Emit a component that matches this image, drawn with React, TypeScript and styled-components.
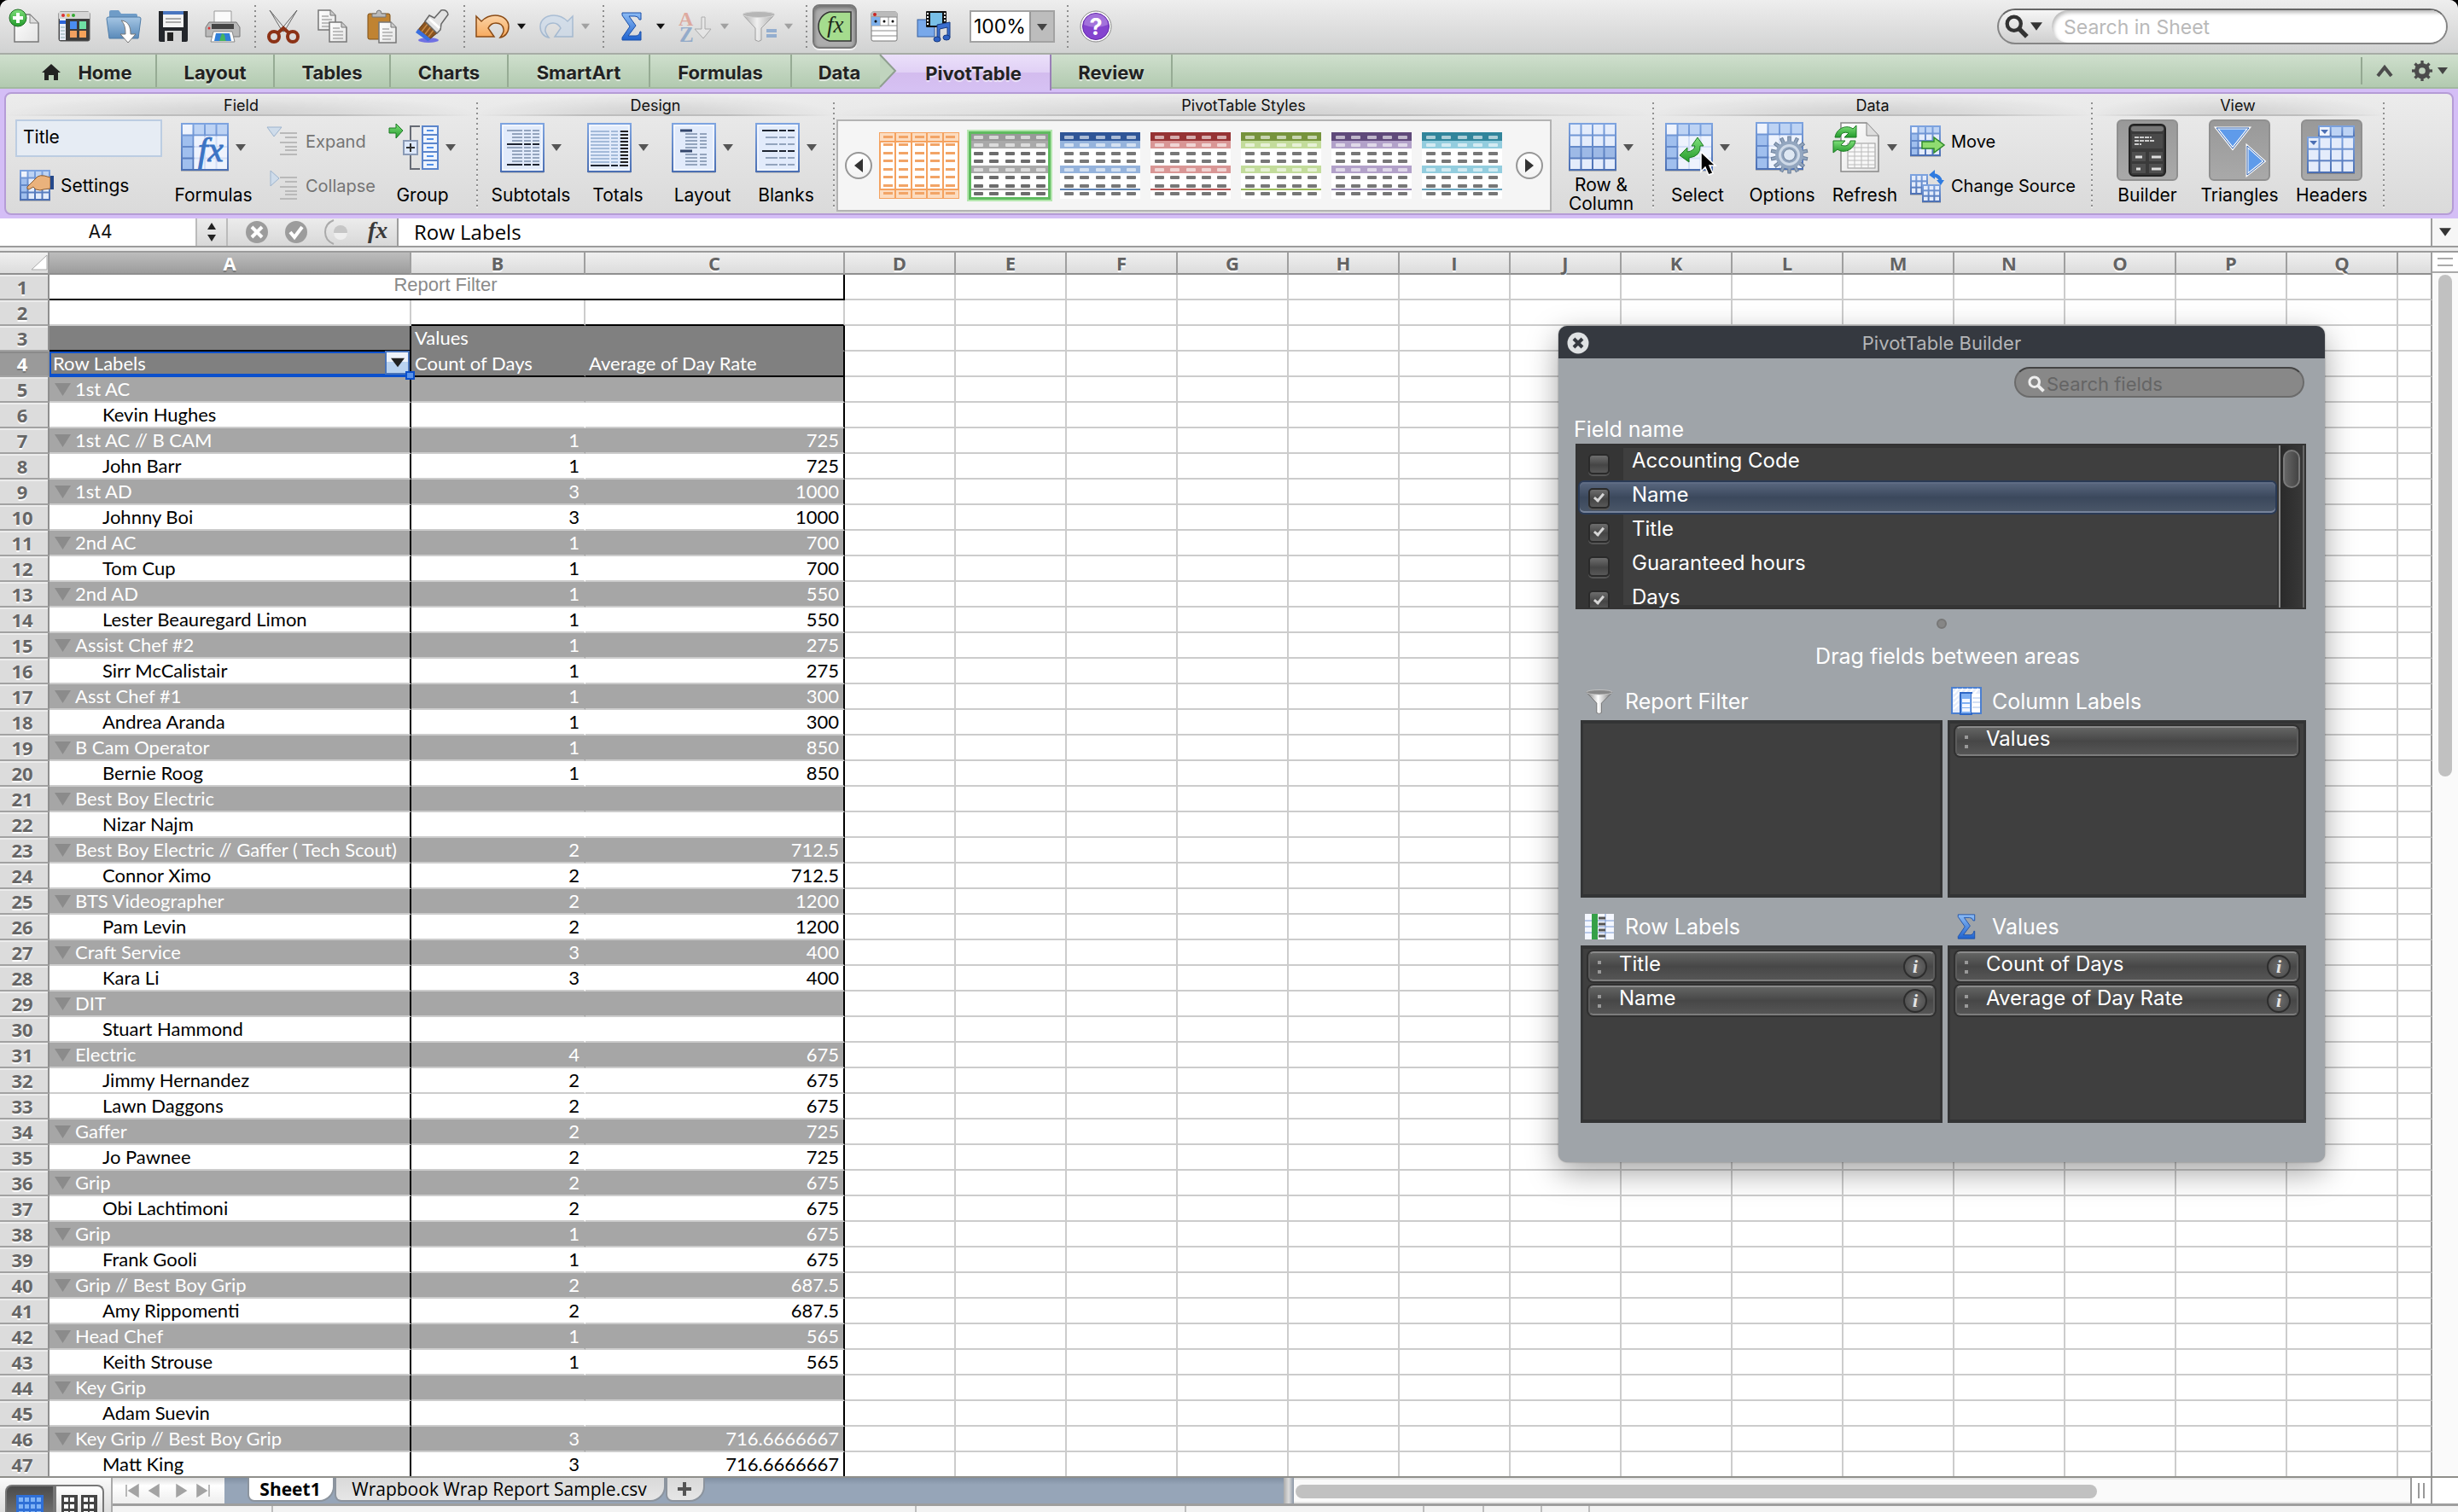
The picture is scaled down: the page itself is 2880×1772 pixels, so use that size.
import React from 'react';
import styled, { createGlobalStyle, css } from 'styled-components';

const UI = `Inter, Roboto, "Liberation Sans", sans-serif`;
const CELL = `Lato, "Open Sans", sans-serif`;
const GRANDE = `"Open Sans", "Noto Sans", sans-serif`;

const GlobalStyle = createGlobalStyle`
  *, *::before, *::after { box-sizing: border-box; }
  html, body { margin: 0; background: #000; }
  button, input, select { font: inherit; color: inherit; margin: 0; padding: 0; border: 0; background: none; }
  input:focus, button:focus { outline: none; }
  svg { display: block; flex: none; overflow: visible; }
`;

const Window = styled.div`
  height: 100vh;
  display: flex;
  flex-direction: column;
  overflow: hidden;
  border-radius: 10px 10px 0 0;
  background: #e8e8e8;
  font: 400 21px/26px ${UI};
  color: #111;
`;

/* ---------- toolbar ---------- */
const Toolbar = styled.header`
  flex: none;
  height: 64px;
  display: flex;
  align-items: center;
  background: linear-gradient(#eeeeee, #e2e2e2 40%, #d1d2d2);
  border-bottom: 2px solid #a7aca6;
`;
const ToolButton = styled.button<{ $dim?: boolean }>`
  width: 58px;
  height: 52px;
  display: grid;
  place-items: center;
  opacity: ${(p) => (p.$dim ? 0.5 : 1)};
`;
const PressedTool = styled(ToolButton)`
  width: 52px;
  margin: 0 3px;
  border-radius: 8px;
  background: #adadad;
  border: 2px solid #777;
  box-shadow: inset 0 2px 4px #666, 0 2px 0 #f3f3f3;
`;
const CaretButton = styled.button<{ $dim?: boolean }>`
  width: 17px;
  height: 40px;
  display: flex;
  align-items: center;
  opacity: ${(p) => (p.$dim ? 0.45 : 1)};
`;
const ToolRule = styled.span`
  width: 2px;
  height: 50px;
  margin: 0 3px 0 8px;
  background: repeating-linear-gradient(#8d8d8d 0 2px, transparent 2px 6px);
`;
const ZoomBox = styled.div`
  position: relative;
  width: 100px;
  height: 38px;
  margin: 0 6px 0 13px;
`;
const ZoomSelect = styled.select`
  appearance: none;
  width: 100%;
  height: 100%;
  padding-left: 3px;
  font: 400 23px/34px ${UI};
  color: #000;
  border: 2px solid #a2a2a2;
  border-radius: 0;
  background: linear-gradient(to right, #fff 68px, #999 68px 70px, #bdbdbd 70px);
`;
const ZoomCaret = styled.span`
  position: absolute;
  right: 9px;
  top: 14px;
  pointer-events: none;
`;
const SheetSearch = styled.label`
  display: flex;
  margin: 0 12px 0 auto;
  width: 528px;
  height: 42px;
  border: 2px solid #858585;
  border-top-color: #666;
  border-radius: 21px;
  overflow: hidden;
  background: linear-gradient(#f6f6f6, #cfcfcf);
`;
const SearchScope = styled.span`
  width: 62px;
  padding-left: 7px;
  display: flex;
  align-items: center;
  gap: 2px;
`;
const SearchInput = styled.input`
  flex: 1;
  min-width: 0;
  padding: 2px 14px 0;
  border-radius: 20px 0 0 20px;
  background: #fff;
  box-shadow: inset 2px 3px 4px #bbb;
  font: 400 23px/34px ${UI};
  &::placeholder { color: #b9b9b9; opacity: 1; }
`;

/* ---------- ribbon tabs ---------- */
const TabStrip = styled.nav`
  flex: none;
  height: 40px;
  display: flex;
  background: linear-gradient(#cfdfcd, #b2cab0);
  border-bottom: 2px solid #a2b9a0;
`;
const Tab = styled.button<{ $w: number; $open?: boolean; $indent?: number }>`
  position: relative;
  width: ${(p) => p.$w}px;
  height: 38px;
  display: flex;
  justify-content: center;
  align-items: center;
  gap: 20px;
  padding: 3px 0 0 ${(p) => p.$indent ?? 0}px;
  font: 700 22px/26px ${UI};
  color: #222;
  text-shadow: 0 2px 1px rgba(255, 255, 255, 0.6);
  border-right: 2px solid ${(p) => (p.$open ? 'transparent' : '#96ab94')};
`;
const ActiveTab = styled(Tab)`
  height: 42px;
  padding-bottom: 1px;
  border-right: 2px solid #9a80b8;
  background: linear-gradient(#ebe0fa, #e0d0f5 50%, #d3bcee 50%, #d6c1f3);
`;
const TabNotch = styled.svg`
  position: absolute;
  left: 0;
  top: 0;
`;
const StripTools = styled.div`
  margin-left: auto;
  width: 114px;
  display: flex;
  align-items: center;
`;
const StripRule = styled.span`
  width: 2px;
  height: 32px;
  background: #94a892;
`;
const StripButton = styled.button<{ $m: number }>`
  margin-left: ${(p) => p.$m}px;
  display: flex;
  align-items: center;
  gap: 6px;
`;

/* ---------- ribbon ---------- */
const Ribbon = styled.section`
  flex: none;
  height: 152px;
  padding: 4px 5px;
  background: #d4bef6;
`;
const RibbonPanel = styled.div`
  height: 144px;
  display: flex;
  border: 2px solid #b59cd6;
  border-radius: 8px;
  background: linear-gradient(#ececec, #dadada);
`;
const RibbonGroup = styled.section<{ $w: number }>`
  width: ${(p) => p.$w}px;
  flex: none;
`;
const GroupTitle = styled.h2`
  margin: 0;
  height: 26px;
  padding-top: 1px;
  font: 400 18px/25px ${UI};
  text-align: center;
  color: #111;
  background: radial-gradient(ellipse 50% 100% at 50% 100%, rgba(0, 0, 0, 0.11), transparent);
  border-bottom: 2px solid transparent;
  border-image: linear-gradient(to right, transparent, #bdbdbd 30%, #bdbdbd 70%, transparent) 1;
`;
const GroupBody = styled.div<{ $pad?: number }>`
  display: flex;
  padding-left: ${(p) => p.$pad ?? 0}px;
`;
const GroupRule = styled.span`
  flex: none;
  width: 2px;
  height: 124px;
  margin-top: 10px;
  background: repeating-linear-gradient(#909090 0 2px, #e9e9e9 2px 4px, transparent 4px 6px);
`;
const BigButton = styled.button<{ $w: number; $lines?: number }>`
  width: ${(p) => p.$w}px;
  padding-top: 8px;
  display: flex;
  flex-direction: column;
  align-items: center;
  gap: ${(p) => (p.$lines === 2 ? 4 : 14)}px;
  line-height: ${(p) => (p.$lines === 2 ? 22 : 26)}px;
  color: #000;
`;
const IconRow = styled.span`
  height: 58px;
  display: flex;
  align-items: center;
  gap: 8px;
`;
const MiniColumn = styled.div<{ $w: number; $pad: number }>`
  width: ${(p) => p.$w}px;
  padding: 8px 0 0 ${(p) => p.$pad}px;
  display: flex;
  flex-direction: column;
  gap: 8px;
`;
const MiniButton = styled.button<{ $off?: boolean }>`
  height: 44px;
  display: flex;
  align-items: center;
  gap: 8px;
  white-space: nowrap;
  font-size: 20px;
  color: ${(p) => (p.$off ? '#747474' : '#000')};
`;
const FieldColumn = styled.div`
  width: 172px;
  padding-top: 4px;
  display: flex;
  flex-direction: column;
  gap: 12px;
`;
const FieldInput = styled.input`
  width: 172px;
  height: 44px;
  padding: 0 7px 4px;
  border: 2px solid #bccde2;
  background: #e6ecf4;
  color: #000;
`;
const FieldSettings = styled(MiniButton)`
  padding-left: 5px;
  font-size: 21px;
`;
const Gallery = styled.div`
  width: 838px;
  height: 108px;
  margin: 4px 0 0 2px;
  padding: 0 8px;
  display: flex;
  align-items: center;
  background: #f5f5f5;
  border: 2px solid #b3b3b3;
`;
const GalleryArrow = styled.button`
  width: 32px;
  height: 32px;
  display: grid;
  place-items: center;
  border: 2px solid #979797;
  border-radius: 50%;
  background: linear-gradient(#fff, #f2f2f2);
`;
const Thumbs = styled.div`
  display: flex;
  gap: 12px;
  margin: 0 16px 0 8px;
`;
const Thumb = styled.button<{ $on?: boolean }>`
  width: 94px;
  height: 78px;
  ${(p) => p.$on && css`outline: 3px solid #5fbb5f; outline-offset: -2px; box-shadow: 0 0 0 3px #b4e6ae;`}
`;
const Toggle = styled.button`
  width: 108px;
  padding-top: 4px;
  display: flex;
  flex-direction: column;
  align-items: center;
  gap: 4px;
  line-height: 26px;
  color: #000;
`;
const ToggleFace = styled.span`
  width: 72px;
  height: 72px;
  display: grid;
  place-items: center;
  border: 2px solid #8f8f8f;
  border-radius: 6px;
  background: linear-gradient(#999, #a9a9a9);
`;
const Pointer = styled.svg`
  position: absolute;
  left: 40px;
  top: 32px;
`;
const PointerHost = styled.span`
  position: relative;
`;

/* ---------- formula bar ---------- */
const FormulaBar = styled.div`
  flex: none;
  height: 34px;
  display: flex;
  background: linear-gradient(#ececec, #d8d8d8);
  border-bottom: 2px solid #9b9b9b;
`;
const NameBox = styled.input`
  width: 231px;
  padding-left: 6px;
  text-align: center;
  background: #fff;
  border-right: 2px solid #bbb;
  font: 400 21px/30px ${UI};
`;
const Stepper = styled.button`
  width: 36px;
  display: grid;
  place-items: center;
  border-right: 2px solid #bbb;
`;
const EntryTools = styled.div`
  width: 198px;
  padding-left: 20px;
  display: flex;
  align-items: center;
  gap: 18px;
`;
const FxButton = styled.button`
  font: italic 700 28px/28px "Liberation Serif", serif;
  color: #3a3a3a;
  margin-top: -4px;
`;
const FormulaInput = styled.input`
  flex: 1;
  min-width: 0;
  padding: 0 18px;
  border: 2px solid #9d9d9d;
  border-width: 0 2px;
  background: #fff;
  color: #000;
  font: 400 24px/30px ${GRANDE};
`;
const FormulaDrop = styled.button`
  width: 30px;
  display: grid;
  place-items: center;
  background: #f6f6f6;
`;
const Divider = styled.div`
  flex: none;
  height: 6px;
  background: #ececec;
  border-bottom: 2px solid #9b9b9b;
`;

/* ---------- sheet ---------- */
const SheetArea = styled.main`
  position: relative;
  flex: 1;
  min-height: 0;
  display: flex;
  background: #fff;
`;
const GridClip = styled.div`
  flex: 1;
  min-width: 0;
  margin-top: -6px;
  padding-top: 6px;
  overflow: hidden;
`;
const Grid = styled.table`
  width: 100%;
  table-layout: fixed;
  border-collapse: separate;
  border-spacing: 0;
  font: 400 22px/26px ${CELL};
  color: #000;
  tr { height: 30px; }
`;
const ColHead = styled.th<{ $active?: boolean }>`
  height: 26px;
  padding: 0;
  font: 700 22px/22px ${GRANDE};
  color: ${(p) => (p.$active ? '#fff' : '#636363')};
  text-shadow: 0 2px 1px ${(p) => (p.$active ? '#777' : '#fff')};
  background: ${(p) => (p.$active ? 'linear-gradient(#bdbdbd, #9c9c9c)' : 'linear-gradient(#f0f0f0, #dcdcdc)')};
  border-right: 2px solid #9f9f9f;
  border-bottom: 2px solid #8f8f8f;
`;
const Corner = styled(ColHead)`
  svg { margin-left: auto; }
`;
const RowHead = styled.th<{ $active?: boolean }>`
  padding: 0 4px 0 0;
  font: 700 22px/26px ${GRANDE};
  color: ${(p) => (p.$active ? '#fff' : '#666')};
  text-shadow: 0 2px 1px ${(p) => (p.$active ? '#777' : '#fff')};
  background: ${(p) => (p.$active ? '#9a9a9a' : '#dcdcdc')};
  border-right: 2px solid #8f8f8f;
  border-bottom: 2px solid #a2a2a2;
  box-shadow: inset 0 2px 0 ${(p) => (p.$active ? '#8a8a8a' : '#ececec')};
`;
type Tone = 'plain' | 'band' | 'head';
const toneOf = { plain: '#fff', band: '#a6a6a6', head: '#808080' };
const Cell = styled.td<{ $tone?: Tone; $right?: string; $bottom?: string; $num?: boolean; $pad?: number }>`
  position: relative;
  padding: 0 ${(p) => (p.$num ? 5 : 0)}px 0 ${(p) => p.$pad ?? 4}px;
  white-space: nowrap;
  text-align: ${(p) => (p.$num ? 'right' : 'left')};
  color: ${(p) => (!p.$tone || p.$tone === 'plain' ? '#000' : '#fff')};
  background: ${(p) => toneOf[p.$tone ?? 'plain']};
  border-right: 2px solid ${(p) => p.$right ?? '#cccccc'};
  border-bottom: 2px solid ${(p) => p.$bottom ?? '#cccccc'};
`;
const FilterCell = styled(Cell)`
  padding-right: 6px;
  text-align: center;
  vertical-align: top;
  font: 400 22px/24px "Liberation Sans", Arial, sans-serif;
  color: #8a8a8a;
`;
const ActiveCell = styled(Cell)`
  box-shadow: inset 2px 2px 0 #0b50cc, inset -2px -2px 0 #0b50cc;
`;
const GroupLabel = styled.span`
  display: flex;
  align-items: center;
  gap: 5px;
`;
const DropButton = styled.button`
  position: absolute;
  right: 0;
  top: -1px;
  width: 29px;
  height: 28px;
  display: grid;
  place-items: center;
  border: 2px solid #4a74b8;
  background: linear-gradient(#eef3fa 45%, #b9d2ef 45%);
`;
const FillHandle = styled.span`
  position: absolute;
  right: -6px;
  bottom: -5px;
  width: 11px;
  height: 10px;
  z-index: 1;
  border: 2px solid #0b50cc;
  background: #5b94ea;
`;
const VScroll = styled.div`
  width: 30px;
  display: flex;
  flex-direction: column;
  align-items: center;
  background: #fafafa;
`;
const VSplit = styled.span`
  width: 100%;
  height: 24px;
  display: grid;
  place-items: center;
  background: #fff;
  border-bottom: 2px solid #aaa;
`;
const VThumb = styled.span`
  width: 16px;
  height: 41%;
  margin-top: 2px;
  border-radius: 8px;
  background: #c1c1c1;
`;

/* ---------- builder ---------- */
const Builder = styled.aside`
  position: absolute;
  top: 86px;
  right: 156px;
  width: 898px;
  padding-bottom: 46px;
  border-radius: 10px;
  overflow: hidden;
  background: #9fa4a9;
  color: #fff;
  box-shadow: 0 12px 36px rgba(0, 0, 0, 0.36), 0 0 2px rgba(0, 0, 0, 0.4);
  font: 400 25px/30px ${UI};
  z-index: 2;
`;
const BuilderBar = styled.header`
  height: 38px;
  display: flex;
  align-items: center;
  padding: 2px 36px 0 10px;
  background: #353940;
`;
const BuilderTitle = styled.h2`
  flex: 1;
  margin: 0;
  text-align: center;
  font: 400 22px/30px ${UI};
  color: #b4b5b7;
`;
const FieldSearch = styled.label`
  width: 340px;
  height: 36px;
  margin: 10px 24px 0 auto;
  padding: 3px 0 0 14px;
  display: flex;
  align-items: center;
  gap: 2px;
  border: 2px solid #6b6b6b;
  border-top-color: #444;
  border-radius: 18px;
  background: #888;
`;
const FieldSearchInput = styled.input`
  flex: 1;
  min-width: 0;
  font: 400 22px/30px ${UI};
  &::placeholder { color: #656565; opacity: 1; }
`;
const ListTitle = styled.h3`
  margin: 22px 0 2px 18px;
  font: 400 25px/30px ${UI};
`;
const FieldList = styled.div`
  height: 194px;
  margin: 0 22px 0 20px;
  display: flex;
  border: 2px solid #333;
  background: #3f3f3f;
  overflow: hidden;
`;
const FieldRows = styled.div`
  flex: 1;
  border: 3px solid #353535;
  border-right-width: 2px;
  background: linear-gradient(to right, #353535 51px, #3f3f3f 51px);
`;
const FieldRow = styled.label<{ $on?: boolean }>`
  height: 36px;
  margin: 0 2px 4px 0;
  padding: 0 0 6px 10px;
  display: flex;
  align-items: center;
  gap: 26px;
  border-radius: 5px;
  font: 400 24px/28px ${UI};
  ${(p) => p.$on && css`
    background: linear-gradient(#5a6880, #3b485c 50%, #4b5769);
    box-shadow: 0 0 0 2px #2a3a55, inset 0 -2px 0 #76839a, inset 0 2px 0 #5f6c84;
  `}
`;
const Tick = styled.input`
  appearance: none;
  position: relative;
  width: 25px;
  height: 24px;
  margin-top: 7px;
  border: 2px solid #2a2a2a;
  border-radius: 5px;
  background: linear-gradient(#6e6e6e, #454545 55%, #585858);
  box-shadow: 0 2px 0 #555;
  &:checked::after {
    content: '';
    position: absolute;
    left: 7px;
    top: 2px;
    width: 7px;
    height: 12px;
    border: solid #d6d6d6;
    border-width: 0 3px 3px 0;
    transform: rotate(40deg);
  }
`;
const ListScroll = styled.div`
  width: 30px;
  border-left: 2px solid #8a8a8a;
  border-right: 2px solid #666;
  padding: 5px 3px;
  background: linear-gradient(to right, #2a2a2a, #383838);
`;
const ListThumb = styled.div`
  height: 45px;
  border-radius: 10px;
  border: 2px solid #7a7a7a;
  background: linear-gradient(to right, #666, #444);
`;
const Grip = styled.div`
  width: 12px;
  height: 12px;
  margin: 11px auto 17px;
  border-radius: 50%;
  background: #868686;
  border: 2px solid #777;
`;
const DragHint = styled.p`
  margin: 0;
  padding-left: 14px;
  text-align: center;
`;
const Zones = styled.div`
  display: grid;
  grid-template-columns: 424fr 420fr;
  column-gap: 6px;
  margin: 4px 22px 0 26px;
`;
const ZoneTitle = styled.h3`
  margin: 0;
  height: 56px;
  padding: 0 0 4px 4px;
  display: flex;
  align-items: flex-end;
  gap: 12px;
  font: 400 25px/36px ${UI};
`;
const ZoneBox = styled.div`
  height: 208px;
  padding: 3px 6px;
  display: flex;
  flex-direction: column;
  gap: 5px;
  border: 4px solid #333435;
  border-width: 4px 3px;
  background: #3f3f3f;
`;
const Chip = styled.div`
  height: 35px;
  padding: 0 7px 0 8px;
  display: flex;
  align-items: center;
  gap: 20px;
  font: 400 24px/28px ${UI};
  border-radius: 6px;
  border: 2px solid #707070;
  border-color: #8a8a8a #5c5c5c #7d7d7d;
  background: linear-gradient(#636463, #474747 50%, #555);
  box-shadow: 0 0 0 2px #303030;
`;
const ChipName = styled.span`
  flex: 1;
  padding-bottom: 6px;
`;
const InfoButton = styled.button`
  width: 28px;
  height: 28px;
  border-radius: 50%;
  border: 2px solid #2d2d2d;
  background: radial-gradient(#6d6d6d, #484848);
  font: italic 700 22px/22px "Liberation Serif", serif;
  color: #e6e6e6;
`;

/* ---------- bottom ---------- */
const Footer = styled.footer`
  flex: none;
  height: 42px;
  display: flex;
  border-top: 2px solid #8f8f8b;
`;
const ViewSwitch = styled.div`
  width: 132px;
  padding: 8px 8px 0 6px;
  display: flex;
  background: linear-gradient(#fafafa, #ddd);
  border-right: 2px solid #aaa;
`;
const ViewButton = styled.button<{ $on?: boolean }>`
  flex: 1;
  padding-top: 10px;
  display: grid;
  justify-items: center;
  align-items: start;
  overflow: hidden;
  border: 2px solid #777;
  border-bottom: 0;
  border-radius: ${(p) => (p.$on ? '8px 0 0 0' : '0 8px 0 0')};
  background: ${(p) => (p.$on ? 'linear-gradient(#4a4a4a, #6e6e6e)' : 'linear-gradient(#fff, #e3e3e3)')};
`;
const FooterMain = styled.div`
  flex: 1;
  min-width: 0;
  display: flex;
  flex-direction: column;
`;
const SheetTabs = styled.div`
  height: 30px;
  display: flex;
  background: linear-gradient(#8190a3, #96a5b8 8px);
`;
const TabNav = styled.div`
  width: 131px;
  padding: 0 14px;
  display: flex;
  align-items: center;
  justify-content: space-between;
  background: linear-gradient(#dedede, #fff 30%, #eee);
`;
const SheetTab = styled.button<{ $w: number; $on?: boolean }>`
  width: ${(p) => p.$w}px;
  height: 28px;
  padding-right: 2px;
  text-align: center;
  white-space: nowrap;
  border: 2px solid #8c949e;
  border-top: 0;
  border-radius: 0 0 18px 8px;
  background: ${(p) => (p.$on ? '#fff' : 'linear-gradient(#d9d9d9, #e6e6e6)')};
  font: ${(p) => (p.$on ? 700 : 400)} 21px/24px ${GRANDE};
  color: #000;
`;
const TabsRow = styled.div`
  display: flex;
  margin-left: 27px;
`;
const HArea = styled.div`
  margin-left: auto;
  width: 1346px;
  display: flex;
`;
const HSplit = styled.span`
  width: 12px;
  background: linear-gradient(to right, #aaa, #ddd, #8894a4);
`;
const HTrack = styled.div`
  flex: 1;
  display: flex;
  align-items: center;
  padding: 2px 2px 0;
  background: #fafafa;
  box-shadow: inset 0 2px 0 #e6e6e6, inset 0 -2px 0 #e6e6e6;
`;
const HThumb = styled.span`
  width: 72%;
  height: 16px;
  border-radius: 8px;
  background: #c1c1c1;
`;
const HGrip = styled.span`
  width: 26px;
  display: grid;
  place-items: center;
  background: #fff;
  border: solid #9a9a9a;
  border-width: 0 2px;
`;
const FooterEnd = styled.span`
  width: 30px;
  background: #fff;
`;
const StatusBar = styled.div`
  flex: 1;
  display: flex;
  border-top: 3px solid #9e9e9e;
  background: #f3f3f3;
`;
const StatusCell = styled.span<{ $w: number }>`
  width: ${(p) => p.$w}px;
  border-right: 2px solid #bdbdbd;
`;

/* ---------- drawings ---------- */
const Caret = ({ w = 12, color = '#555' }: { w?: number; color?: string }) => (
  <svg width={w} height={w} viewBox="0 0 12 12"><path d="M0 2h12L6 10z" fill={color} /></svg>
);

type MatrixProps = { x?: number; y?: number; w: number; h: number; cols: number; rows: number; head?: boolean; sheet?: boolean; dark?: number[] };
const Matrix = ({ x = 0, y = 0, w, h, cols, rows, head, sheet, dark = [] }: MatrixProps) => {
  const cw = (w - 2) / cols;
  const ch = (h - 2) / rows;
  const out = [];
  for (let r = 0; r < rows; r++) {
    for (let c = 0; c < cols; c++) {
      const edge = head && (r === 0 || c === 0);
      const fill = dark.includes(r) ? '#9db9e6' : edge ? (r + c === 0 ? '#eef3fd' : r === 0 ? '#bdd3f4' : '#a0bfee') : sheet ? '#eef3fd' : '#e4ecfb';
      out.push(<rect key={`${r}-${c}`} x={x + 2 + c * cw} y={y + 2 + r * ch} width={cw - 2} height={ch - 2} fill={fill} />);
    }
  }
  return (
    <g>
      <rect x={x} y={y + 1} width={w} height={h} fill="#000" opacity="0.2" />
      <rect x={x} y={y} width={w} height={h} fill="url(#gridEdge)" />
      {sheet && <rect x={x + 2 + cw} y={y + 2 + ch} width={w - cw - 4} height={h - ch - 4} fill="#d3dff6" />}
      {out}
    </g>
  );
};

const DefsHost = styled.svg`
  position: absolute;
`;
const SharedDefs = () => (
  <DefsHost width="0" height="0" aria-hidden="true">
    <defs>
      <linearGradient id="gridEdge" x1="0" y1="0" x2="0" y2="1"><stop offset="0" stopColor="#7ea4e0" /><stop offset="1" stopColor="#4b6fb3" /></linearGradient>
      <linearGradient id="pageFill" x1="0" y1="0" x2="1" y2="1"><stop offset="0" stopColor="#fff" /><stop offset="1" stopColor="#e4e4e4" /></linearGradient>
      <linearGradient id="blueFill" x1="0" y1="0" x2="0" y2="1"><stop offset="0" stopColor="#8dbcf5" /><stop offset="1" stopColor="#1f63cf" /></linearGradient>
      <linearGradient id="folderFill" x1="0" y1="0" x2="0" y2="1"><stop offset="0" stopColor="#a5c6e4" /><stop offset="1" stopColor="#5a8ab9" /></linearGradient>
      <linearGradient id="greenFill" x1="0" y1="0" x2="0" y2="1"><stop offset="0" stopColor="#7fe07a" /><stop offset="1" stopColor="#229a2b" /></linearGradient>
      <linearGradient id="orangeFill" x1="0" y1="0" x2="0" y2="1"><stop offset="0" stopColor="#fbd3a6" /><stop offset="1" stopColor="#f7a95c" /></linearGradient>
      <linearGradient id="metalFill" x1="0" y1="0" x2="1" y2="0"><stop offset="0" stopColor="#777" /><stop offset="0.45" stopColor="#fff" /><stop offset="1" stopColor="#777" /></linearGradient>
    </defs>
  </DefsHost>
);

const NewIcon = () => (
  <svg width="36" height="40" viewBox="0 0 36 40">
    <path d="M6 6h18l10 10v22H6z" fill="url(#pageFill)" stroke="#777" strokeWidth="1.5" /><path d="M24 6v10h10z" fill="#ddd" stroke="#888" />
    <circle cx="10" cy="10" r="10" fill="url(#greenFill)" stroke="#1b6e20" /><path d="M10 4v12M4 10h12" stroke="#fff" strokeWidth="4" />
  </svg>
);
const GalleryIcon = () => (
  <svg width="38" height="36" viewBox="0 0 38 36">
    <rect x="1" y="1" width="36" height="34" rx="2" fill="#3c3c3c" stroke="#555" /><rect x="1" y="1" width="36" height="8" fill="#d6d6d6" />
    <circle cx="6" cy="5" r="2" fill="#d33" /><circle cx="12" cy="5" r="2" fill="#da2" /><circle cx="18" cy="5" r="2" fill="#3a3" />
    <rect x="2" y="9" width="7" height="25" fill="#e9eefa" /><rect x="2" y="11" width="7" height="4" fill="#2a64d8" /><path d="M3 19h5M3 23h5M3 27h5M3 31h5" stroke="#8aa" />
    <rect x="14" y="12" width="8" height="9" fill="#4a8df0" /><rect x="25" y="12" width="8" height="9" fill="#6fe0a5" />
    <rect x="14" y="23" width="8" height="8" fill="#f0a060" /><rect x="25" y="23" width="8" height="8" fill="#f5a25a" />
  </svg>
);
const OpenIcon = () => (
  <svg width="40" height="40" viewBox="0 0 40 40">
    <path d="M3 3q0-2 2-2h9l3 4h17q2 0 2 2v26H3z" fill="#6f9cc7" /><path d="M0 11q0-2 2-2h36q2 0 2 2l-3 23H3z" fill="url(#folderFill)" stroke="#507da8" />
    <path d="M17 13c9 1 11 8 11 16h6l-9 10-9-10h6c0-7-1-12-5-16z" fill="#fff" stroke="#777" />
  </svg>
);
const SaveIcon = () => (
  <svg width="36" height="38" viewBox="0 0 36 38">
    <path d="M1 1h34v34q0 2-2 2H3q-2 0-2-2z" fill="#23262b" /><rect x="6" y="1" width="24" height="19" fill="#f3f3f3" /><rect x="6" y="1" width="24" height="4" fill="#4a76c0" />
    <path d="M9 10h18M9 14h18" stroke="#aaa" strokeWidth="2" /><rect x="8" y="24" width="20" height="13" fill="#d5d5d5" /><rect x="11" y="26" width="7" height="10" fill="#222" />
  </svg>
);
const PrintIcon = () => (
  <svg width="42" height="38" viewBox="0 0 42 38">
    <path d="M11 1h20v16H11z" fill="#fafafa" stroke="#999" /><path d="M5 14h32l4 6v11H1V20z" fill="#b9b9b9" stroke="#777" /><rect x="8" y="16" width="26" height="6" fill="#444" />
    <path d="M10 25h22l3 12H7z" fill="#fff" stroke="#888" /><path d="M13 27h16l2 9H11z" fill="#2f7fd8" /><path d="M20 27c6 2 2 6 5 9h-8z" fill="#45b55c" /><circle cx="5" cy="21" r="1.5" fill="#d33" />
  </svg>
);
const CutIcon = () => (
  <svg width="38" height="40" viewBox="0 0 38 40">
    <path d="M3 1l19 23-4 2zM35 1L16 24l4 2z" fill="#e6e6e6" stroke="#666" />
    <circle cx="8" cy="32" r="6" fill="none" stroke="#8c3216" strokeWidth="4" /><circle cx="30" cy="32" r="6" fill="none" stroke="#8c3216" strokeWidth="4" />
    <path d="M12 28l7-6 7 6" fill="none" stroke="#8c3216" strokeWidth="4" />
  </svg>
);
const CopyIcon = () => (
  <svg width="36" height="40" viewBox="0 0 36 40">
    {[[1, 1], [14, 15]].map(([x, y]) => (
      <g key={x} transform={`translate(${x} ${y})`}>
        <path d="M0 0h14l6 6v17H0z" fill="url(#pageFill)" stroke="#777" strokeWidth="1.5" /><path d="M14 0v6h6" fill="#ccc" stroke="#777" />
        <path d="M4 7h8M4 11h12M4 15h12M4 19h12" stroke="#aaa" strokeWidth="1.5" />
      </g>
    ))}
  </svg>
);
const PasteIcon = () => (
  <svg width="36" height="40" viewBox="0 0 36 40">
    <rect x="1" y="5" width="26" height="30" rx="2" fill="#c08332" stroke="#7d4f17" /><path d="M6 9V5h5q0-4 3-4t3 4h5v4z" fill="#bbb" stroke="#777" />
    <g transform="translate(14 15)"><path d="M0 0h14l6 6v18H0z" fill="url(#pageFill)" stroke="#777" strokeWidth="1.5" /><path d="M14 0v6h6" fill="#ccc" stroke="#777" /><path d="M4 8h8M4 12h12M4 16h12M4 20h10" stroke="#aaa" strokeWidth="1.5" /></g>
  </svg>
);
const BrushIcon = () => (
  <svg width="40" height="40" viewBox="0 0 40 40">
    <ellipse cx="16" cy="36" rx="12" ry="3" fill="#4444e8" opacity="0.7" />
    <path d="M13 13L3 25l13 11 11-9z" fill="#8a5420" stroke="#5f3814" /><path d="M15 17l-7 9M19 20l-7 9M23 23l-7 9" stroke="#c98a44" strokeWidth="1.5" /><path d="M4 23l15 12-4 2L1 27z" fill="#3a6fe0" />
    <path d="M17 7l6 3 8-9q7-1 8 5l-8 11-1 7-4 4L12 14z" fill="#e2e2e2" stroke="#666" strokeWidth="1.5" /><path d="M17 11l12 11" stroke="#fff" strokeWidth="3" />
  </svg>
);
const CurvedArrow = ({ flip }: { flip?: boolean }) => (
  <svg width="40" height="28" viewBox="0 0 40 28">
    <path transform={flip ? 'matrix(-1 0 0 1 40 0)' : undefined} d="M1 2l6 6C12 3 17 1 23 1c10 0 16 6 16 13 0 7-4 12-10 13 3-4 5-7 4-10-1-5-5-7-9-7-4 0-7 2-9 6l7 10H1z" fill={flip ? '#c5d9ef' : 'url(#orangeFill)'} stroke={flip ? '#6f97c4' : '#8a4b16'} strokeWidth="1.5" />
  </svg>
);
const SigmaIcon = ({ w = 24, h = 34 }: { w?: number; h?: number }) => (
  <svg width={w} height={h} viewBox="0 0 24 34"><path d="M1 1h22v8h-2q-1-4-5-4H9l8 11L8 28h9q4 0 5-5h1v10H1v-3l9-13L1 4z" fill="url(#blueFill)" stroke="#1a4fa8" /></svg>
);
const SortIcon = () => (
  <svg width="40" height="38" viewBox="0 0 40 38">
    <text x="0" y="18" fontFamily="Liberation Serif, serif" fontWeight="700" fontSize="24" fill="#d9705c">A</text>
    <text x="1" y="37" fontFamily="Liberation Serif, serif" fontWeight="700" fontSize="25" fill="#4f7dba">Z</text>
    <path d="M27 8h4v14h7l-9 11-10-11h8z" fill="#eee" stroke="#777" />
  </svg>
);
const FunnelIcon = ({ lines = true, w = 42, h = 36 }: { lines?: boolean; w?: number; h?: number }) => (
  <svg width={w} height={h} viewBox={lines ? '0 0 42 36' : '0 0 40 36'}>
    <path d="M1 4l15 16v14q4 3 7 0V20L39 4z" fill="url(#metalFill)" stroke="#666" /><ellipse cx="20" cy="4" rx="19" ry="3.5" fill="#888" stroke="#ccc" />
    {lines && <path d="M29 21h12v4H29zM29 27h12v4H29z" fill="#4f82c4" />}
  </svg>
);
const FxBoxIcon = () => (
  <svg width="40" height="36" viewBox="0 0 40 36">
    <path d="M14 1h25v34H14C6 33 1 26 1 18S6 3 14 1z" fill="#a5dc8e" stroke="#333" strokeWidth="1.5" />
    <text x="11" y="25" fontFamily="Liberation Serif, serif" fontStyle="italic" fontSize="27" fill="#1d2a1a">fx</text>
  </svg>
);
const FormIcon = () => (
  <svg width="32" height="36" viewBox="0 0 32 36">
    <rect x="1" y="1" width="30" height="34" rx="2" fill="#fff" stroke="#777" /><rect x="1" y="1" width="30" height="6" fill="#bbb" /><circle cx="5" cy="4" r="2" fill="#c22" />
    <path d="M1 7h30M1 17h30M1 23h30M1 29h30M11 7v10M21 7v10" stroke="#888" /><rect x="1" y="7" width="10" height="10" fill="#7eb0ea" /><circle cx="6" cy="12" r="1.5" /><circle cx="16" cy="12" r="1.5" /><circle cx="26" cy="12" r="1.5" />
  </svg>
);
const MediaIcon = () => (
  <svg width="40" height="38" viewBox="0 0 40 38">
    <rect x="1" y="11" width="20" height="20" fill="#78a8ea" stroke="#345f9f" /><rect x="11" y="1" width="24" height="19" rx="1" fill="#111" /><rect x="16" y="3" width="14" height="15" fill="#79bfe6" />
    <path d="M13 3v16M33 3v16" stroke="#fff" strokeWidth="2" strokeDasharray="2 2" />
    <path d="M24 17l15-3v18h-3V20l-9 2v13h-3z" fill="#3b6fd0" stroke="#173a80" /><ellipse cx="24" cy="34" rx="4" ry="3" fill="#2f62c4" stroke="#173a80" /><ellipse cx="35" cy="32" rx="4" ry="3" fill="#2f62c4" stroke="#173a80" />
  </svg>
);
const HelpIcon = () => (
  <svg width="38" height="38" viewBox="0 0 38 38">
    <circle cx="19" cy="19" r="18" fill="#fff" stroke="#888" /><circle cx="19" cy="19" r="15.500" fill="#8443cf" stroke="#6427ab" />
    <path d="M5 17a14 13 0 0 1 28 0q-14 6-28 0z" fill="#fff" opacity="0.25" />
    <text x="19" y="29" textAnchor="middle" fontFamily="Inter, sans-serif" fontWeight="700" fontSize="27" fill="#fff">?</text>
  </svg>
);
const LensIcon = ({ w, color }: { w: number; color: string }) => (
  <svg width={w} height={w} viewBox="0 0 26 26"><circle cx="10" cy="10" r="7.500" fill="none" stroke={color} strokeWidth="4" /><path d="M15 15l9 9" stroke={color} strokeWidth="5" /></svg>
);
const HomeIcon = () => (
  <svg width="22" height="19" viewBox="0 0 22 19"><path d="M11 0l11 10h-3v9h-5v-6H8v6H3v-9H0z" fill="#222" /></svg>
);
const GearGlyph = ({ size, teeth, fill, hole, stroke }: { size: number; teeth: number; fill: string; hole: string; stroke: string }) => {
  const c = size / 2;
  const tooth = size / (teeth * 0.9);
  return (
    <g>
      {Array.from({ length: teeth }, (_, i) => (
        <rect key={i} x={c - tooth / 2} y="0" width={tooth} height={c} fill={fill} stroke={stroke} transform={`rotate(${(360 / teeth) * i} ${c} ${c})`} />
      ))}
      <circle cx={c} cy={c} r={size * 0.38} fill={fill} /><circle cx={c} cy={c} r={size * 0.16} fill={hole} stroke={stroke} />
    </g>
  );
};
const GearIcon = () => (
  <svg width="24" height="24" viewBox="0 0 24 24"><GearGlyph size={24} teeth={8} fill="#4c4c4c" hole="#c0d2be" stroke="none" /></svg>
);

const FormulasIcon = () => (
  <svg width="56" height="58" viewBox="0 0 56 58">
    <Matrix w={56} h={56} cols={4} rows={4} head sheet />
    <text x="20" y="45" fontFamily="Liberation Serif, serif" fontStyle="italic" fontSize="41" fill="#3b74c4" stroke="#3b74c4">fx</text>
  </svg>
);
const SettingsIcon = () => (
  <svg width="40" height="38" viewBox="0 0 40 38">
    <Matrix w={36} h={36} cols={4} rows={4} head />
    <path d="M9 20l12-12q3-2 8-1l7 2v13l-8 1-4 1-5-1-3-3-5 3q-3 0-2-3z" fill="#eab27c" stroke="#8a5a2e" /><path d="M36 7h4v16h-4z" fill="#24488a" />
  </svg>
);
const OutlineIcon = ({ open }: { open?: boolean }) => (
  <svg width="38" height="38" viewBox="0 0 38 38">
    {open ? <path d="M1 2h17L9 13z" fill="#cfdcea" stroke="#9db4ce" /> : <path d="M5 1l10 9-10 9z" fill="#cfdcea" stroke="#9db4ce" />}
    <path d="M16 9h20M22 14h14M16 20h20M22 25h14M22 29h14M16 34h20" stroke="#b9b9b9" strokeWidth="2" />
  </svg>
);
const GroupIcon = () => (
  <svg width="58" height="56" viewBox="0 0 58 56">
    <path d="M0 5h8V0l8 8-8 9v-6H0z" fill="url(#greenFill)" stroke="#1d7a25" /><path d="M36 3H25v50h11" fill="none" stroke="#666b75" strokeWidth="2" />
    <rect x="17" y="20" width="16" height="16" fill="#dde8fb" stroke="#8a9ab5" strokeWidth="2" /><path d="M25 23v10M20 28h10" stroke="#333" strokeWidth="2" />
    {[0, 1, 2, 3, 4].map((i) => (
      <g key={i}><rect x="39" y={3 + i * 10} width="18" height="10" fill="#eef4fe" stroke="#5b85cb" strokeWidth="2" /><path d={`M44 ${8 + i * 10}h8`} stroke="#4f8fe8" strokeWidth="2" /></g>
    ))}
  </svg>
);
type DocKind = 'subtotals' | 'totals' | 'layout' | 'blanks';
const DocIcon = ({ kind }: { kind: DocKind }) => {
  const lines = [];
  const step = kind === 'blanks' ? 8 : 4;
  let i = 0;
  for (let y = kind === 'totals' ? 10 : 9; y <= 50; y += step, i++) {
    const strong = kind === 'subtotals' ? i === 4 || i === 10 : kind === 'layout' ? i % 6 === 0 : kind === 'blanks' ? i % 3 === 0 : i === 10;
    const dark = strong ? '#1e2430' : kind === 'totals' ? '#a3bad9' : '#93a4bd';
    if (kind === 'layout') {
      lines.push(strong ? <path key={y} d={`M10 ${y}h14`} stroke="#34466b" strokeWidth="3" /> : <path key={y} d={`M16 ${y}h14M33 ${y}h8`} stroke={dark} strokeWidth="2" />);
    } else {
      const x0 = kind === 'totals' ? 4 : strong ? 8 : kind === 'blanks' ? 12 : i === 5 || i === 0 ? 8 : 14;
      lines.push(<path key={y} d={`M${x0} ${y}H26M28 ${y}h8M38 ${y}h8`} stroke={dark} strokeWidth="2" />);
      if (kind === 'totals') lines.push(<path key={`t${y}`} d={`M39 ${y}h9`} stroke="#222" strokeWidth="2" />);
    }
  }
  return (
    <svg width="52" height="58" viewBox="0 0 52 58">
      <rect x="1" y="1" width="50" height="58" fill="#000" opacity="0.15" /><rect x="1" y="1" width="50" height="56" fill="#e2ebfb" stroke="url(#gridEdge)" strokeWidth="2" />
      <rect x="3" y="3" width="46" height="52" fill="none" stroke="#fff" />{lines}
    </svg>
  );
};
const RowColIcon = () => (<svg width="56" height="58" viewBox="0 0 56 58"><Matrix w={56} h={56} cols={4} rows={4} dark={[2]} /></svg>);
const SelectIcon = () => (
  <svg width="56" height="58" viewBox="0 0 56 58">
    <Matrix w={56} h={56} cols={4} rows={4} head sheet />
    <path d="M38 17l7 10h-4q1 12-13 14v5l-11-8 9-9v5q8-1 9-7h-4z" fill="url(#greenFill)" stroke="#1d7a25" />
  </svg>
);
const OptionsIcon = () => (
  <svg width="62" height="60" viewBox="0 0 62 60">
    <Matrix w={56} h={56} cols={4} rows={4} head sheet />
    <g transform="translate(18 17)"><GearGlyph size={43} teeth={14} fill="#93a6bf" hole="#dfe8f3" stroke="#6b7f9a" /><circle cx="21.500" cy="21.500" r="11" fill="none" stroke="#cfdae8" strokeWidth="3" /></g>
  </svg>
);
const RefreshIcon = () => (
  <svg width="56" height="60" viewBox="0 0 56 60">
    <path d="M10 1h30l14 15v42H10z" fill="url(#pageFill)" stroke="#888" strokeWidth="1.500" /><path d="M40 1v15h14" fill="#ddd" stroke="#888" />
    <rect x="18" y="25" width="32" height="29" fill="#f8f8f8" stroke="#999" /><path d="M18 30h32M18 35h32M18 40h32M18 45h32M18 50h32M26 25v29M34 25v29M42 25v29" stroke="#bbb" />
    <path d="M3 18C5 6 18 3 24 8l4-4v14H14l5-5c-5-2-9 0-10 5z" fill="url(#greenFill)" stroke="#1d7a25" /><path d="M27 22C25 34 12 37 6 32l-5 4V22h14l-5 5c5 2 10 1 11-5z" fill="url(#greenFill)" stroke="#1d7a25" />
  </svg>
);
const MoveIcon = () => (
  <svg width="40" height="38" viewBox="0 0 40 38"><Matrix w={36} h={36} cols={4} rows={4} head /><path d="M14 19h14v-5l12 9-12 9v-5H14z" fill="#8fdb70" stroke="#2f8a2b" strokeWidth="1.500" /></svg>
);
const SourceIcon = () => (
  <svg width="40" height="40" viewBox="0 0 40 40"><Matrix y={6} w={21} h={24} cols={3} rows={3} /><Matrix x={14} y={18} w={22} h={21} cols={3} rows={3} /><path d="M27 7q8 1 9 8" fill="none" stroke="#2f7be0" strokeWidth="4" /><path d="M22 7l7-6v11zM31 13h9l-4 6z" fill="#2f7be0" /></svg>
);
const BuilderIcon = () => (
  <svg width="44" height="62" viewBox="0 0 44 62">
    <rect x="1" y="1" width="42" height="60" rx="5" fill="#3a3a3a" stroke="#222" strokeWidth="2" /><rect x="3" y="3" width="38" height="6" rx="3" fill="#777" /><rect x="4" y="12" width="36" height="17" fill="#4a4a4a" />
    <path d="M7 16h20M7 20h24M7 24h8" stroke="#ccc" strokeWidth="2" strokeDasharray="5 1" />
    <path d="M4 33h16v11H4zM24 33h16v11H24zM4 47h16v11H4zM24 47h16v11H24z" fill="#4f4f4f" /><path d="M8 39h8M27 39h11M9 53h5M27 53h11" stroke="#ddd" strokeWidth="3" />
  </svg>
);
const TrianglesIcon = () => (
  <svg width="60" height="60" viewBox="0 0 60 60"><path d="M3 4h38L22 28z" fill="#5f9bea" stroke="#fff" strokeWidth="3" /><path d="M3 4h38L22 28z" fill="none" stroke="#2c5fae" /><path d="M39 25l20 18-20 16z" fill="#5f9bea" stroke="#fff" strokeWidth="3" /><path d="M39 25l20 18-20 16z" fill="none" stroke="#2c5fae" /></svg>
);
const HeadersIcon = () => (
  <svg width="58" height="58" viewBox="0 0 58 58"><Matrix x={13} y={0} w={43} h={14} cols={3} rows={1} head /><Matrix x={0} y={13} w={56} h={43} cols={4} rows={3} /><path d="M16 5h9l-4 5zM3 18h9l-4 5z" fill="#4b6fb3" /></svg>
);
const ColumnLabelsIcon = () => (
  <svg width="36" height="34" viewBox="0 0 36 34">
    <rect x="1" y="1" width="34" height="30" fill="#e4ecfb" stroke="#4b7fd0" strokeWidth="2" />
    <path d="M3 8l5-6M9 8l5-6M15 8l5-6M21 8l5-6M27 8l5-6M3 14l6-6M3 20l6-6M3 26l6-6" stroke="#fff" strokeWidth="2" />
    <rect x="11" y="7" width="13" height="25" fill="#7fb0f3" stroke="#2f68c6" strokeWidth="2" /><rect x="24" y="8" width="10" height="22" fill="#fff" />
    <path d="M13 16h9M13 22h9M13 27h9" stroke="#f3f7ff" strokeWidth="4" /><path d="M25 13h9M25 18h9M25 24h9" stroke="#a8c1ea" />
  </svg>
);
const RowLabelsIcon = () => (
  <svg width="34" height="30" viewBox="0 0 34 30"><rect width="34" height="30" fill="#f4f7ff" /><path d="M0 8h34M0 15h34M0 22h34M24 0v30" stroke="#7a9ad4" /><rect x="8" y="0" width="7" height="30" fill="#36a048" /><path d="M16 5h8M16 12h8M16 19h8M16 26h8" stroke="#555" strokeWidth="3" /></svg>
);
const EntryMark = ({ kind }: { kind: 'cancel' | 'accept' }) => (
  <svg width="28" height="28" viewBox="0 0 28 28"><circle cx="14" cy="14" r="13" fill="#9c9c9c" /><path d={kind === 'cancel' ? 'M8 8l12 12M20 8L8 20' : 'M7 14l5 6 9-12'} stroke="#fff" strokeWidth="4" fill="none" /></svg>
);
const DialIcon = () => (
  <svg width="34" height="30" viewBox="0 0 34 30"><path d="M12 1Q2 5 2 15t10 14" fill="none" stroke="#aaa" strokeWidth="2" /><circle cx="20" cy="15" r="8" fill="#c6c6c6" /><path d="M12 16a8 8 0 0 0 16 0z" fill="#eee" /></svg>
);
const CellBlocks = ({ fill, n }: { fill: string; n: number }) => (
  <svg width={n === 1 ? 32 : 42} height="24" viewBox={`0 0 ${n === 1 ? 32 : 42} 24`}>
    {Array.from({ length: n }, (_, b) => (
      <g key={b} transform={`translate(${b * 23} 0)`}>
        <rect width={n === 1 ? 32 : 19} height="24" fill={fill} />
        {[0, 1, 2].map((r) => Array.from({ length: n === 1 ? 4 : 2 }, (_, c) => <rect key={`${r}${c}`} x={3 + c * 7} y={3 + r * 8} width="5" height="5" fill={n === 1 ? '#7fb2f5' : '#fff'} />))}
      </g>
    ))}
  </svg>
);

type Palette = { top: string; soft: string; line: string; dash: string };
const StyleThumb = ({ top, soft, line, dash }: Palette) => {
  const ys = [6, 15, 25, 34, 44, 53, 63, 72];
  const xs = [5, 23, 42, 60, 78];
  return (
    <svg width="94" height="78" viewBox="0 0 94 78">
      <rect width="94" height="78" fill="#fff" /><rect width="94" height="10" fill={top} /><rect y="10" width="94" height="9" fill={soft} /><rect y="39" width="94" height="9" fill={soft} /><rect y="66" width="94" height="2" fill={line} />
      {ys.map((y, r) => xs.map((x) => <rect key={`${r}-${x}`} x={x} y={y - 2} width="11" height="4" rx="1" fill={r < 2 || r === 4 ? '#fff' : dash} opacity={r < 2 || r === 4 ? 0.6 : 1} />))}
    </svg>
  );
};
const OrangeThumb = () => (
  <svg width="94" height="78" viewBox="0 0 94 78">
    <rect x="1" y="1" width="92" height="76" fill="#fff" stroke="#f5a25f" strokeWidth="2" /><rect y="1" x="1" width="92" height="10" fill="#fcdcc0" /><rect y="67" x="1" width="92" height="10" fill="#fcdcc0" />
    <path d="M19 0v78M38 0v78M56 0v78M75 0v78M0 11h94M0 67h94" stroke="#f5a25f" strokeWidth="2" />
    {[6, 15, 25, 34, 44, 53, 63, 72].map((y) => [5, 23, 42, 60, 78].map((x) => <rect key={`${y}-${x}`} x={x} y={y - 2} width="11" height="3" fill="#f2a466" />))}
  </svg>
);
const palettes: Palette[] = [
  { top: '#999999', soft: '#a9a9a9', line: '#999', dash: '#6c6c6c' },
  { top: '#2f5597', soft: '#95b3dc', line: '#5d83b5', dash: '#777' },
  { top: '#963334', soft: '#d99695', line: '#b95553', dash: '#777' },
  { top: '#76933c', soft: '#c3dc9b', line: '#9bbb59', dash: '#777' },
  { top: '#5f497a', soft: '#b2a1c9', line: '#9a8cb5', dash: '#777' },
  { top: '#31859b', soft: '#93cdde', line: '#6aa6c0', dash: '#777' },
];

/* ---------- data ---------- */
type Entry = [string, string?, string?];
const groups: Entry[][] = [
  [['1st AC'], ['Kevin Hughes']],
  [['1st AC // B CAM', '1', '725'], ['John Barr', '1', '725']],
  [['1st AD', '3', '1000'], ['Johnny Boi', '3', '1000']],
  [['2nd AC', '1', '700'], ['Tom Cup', '1', '700']],
  [['2nd AD', '1', '550'], ['Lester Beauregard Limon', '1', '550']],
  [['Assist Chef #2', '1', '275'], ['Sirr McCalistair', '1', '275']],
  [['Asst Chef #1', '1', '300'], ['Andrea Aranda', '1', '300']],
  [['B Cam Operator', '1', '850'], ['Bernie Roog', '1', '850']],
  [['Best Boy Electric'], ['Nizar Najm']],
  [['Best Boy Electric // Gaffer ( Tech Scout)', '2', '712.5'], ['Connor Ximo', '2', '712.5']],
  [['BTS Videographer', '2', '1200'], ['Pam Levin', '2', '1200']],
  [['Craft Service', '3', '400'], ['Kara Li', '3', '400']],
  [['DIT'], ['Stuart Hammond']],
  [['Electric', '4', '675'], ['Jimmy Hernandez', '2', '675'], ['Lawn Daggons', '2', '675']],
  [['Gaffer', '2', '725'], ['Jo Pawnee', '2', '725']],
  [['Grip', '2', '675'], ['Obi Lachtimoni', '2', '675']],
  [['Grip', '1', '675'], ['Frank Gooli', '1', '675']],
  [['Grip // Best Boy Grip', '2', '687.5'], ['Amy Rippomenti', '2', '687.5']],
  [['Head Chef', '1', '565'], ['Keith Strouse', '1', '565']],
  [['Key Grip'], ['Adam Suevin']],
  [['Key Grip // Best Boy Grip', '3', '716.6666667'], ['Matt King', '3', '716.6666667']],
];
const rows = groups.flatMap((g) => g.map((entry, i) => ({ entry, lead: i === 0 })));
const columns = 'ABCDEFGHIJKLMNOPQ'.split('');
const spare = columns.slice(3).concat('');
const Spare = () => <>{spare.map((c, i) => <Cell key={c || i} $right={c ? undefined : '#9a9a9a'} />)}</>;

const Col = styled.col<{ $w?: number }>`
  width: ${(p) => (p.$w ? `${p.$w}px` : 'auto')};
`;

const BigDrop = ({ w, label, children, lines }: { w: number; label: React.ReactNode; children: React.ReactNode; lines?: number }) => (
  <BigButton $w={w} $lines={lines}><IconRow>{children}<Caret /></IconRow><span>{label}</span></BigButton>
);

const Zone = ({ title, icon, items, info }: { title: string; icon: React.ReactNode; items: string[]; info?: boolean }) => (
  <section>
    <ZoneTitle>{icon}{title}</ZoneTitle>
    <ZoneBox>
      {items.map((name) => (
        <Chip key={name}>
          <svg width="6" height="20" viewBox="0 0 6 20"><path d="M1 3h4v4H1zM1 14h4v4H1z" fill="#999" /></svg>
          <ChipName>{name}</ChipName>
          {info && <InfoButton aria-label={`${name} settings`}>i</InfoButton>}
        </Chip>
      ))}
    </ZoneBox>
  </section>
);
const ZoneIcon = styled.span`
  width: 36px;
  height: 36px;
  display: grid;
  place-items: center;
`;
const PlusGlyph = styled.svg`
  margin: 0 auto;
`;

const fields: [string, boolean][] = [['Accounting Code', false], ['Name', true], ['Title', true], ['Guaranteed hours', false], ['Days', true]];

export default function App() {
  return (
    <Window>
      <GlobalStyle />
      <SharedDefs />
      <Toolbar>
        <ToolButton aria-label="New"><NewIcon /></ToolButton>
        <ToolButton aria-label="Gallery"><GalleryIcon /></ToolButton>
        <ToolButton aria-label="Open"><OpenIcon /></ToolButton>
        <ToolButton aria-label="Save"><SaveIcon /></ToolButton>
        <ToolButton aria-label="Print"><PrintIcon /></ToolButton>
        <ToolRule />
        <ToolButton aria-label="Cut"><CutIcon /></ToolButton>
        <ToolButton aria-label="Copy"><CopyIcon /></ToolButton>
        <ToolButton aria-label="Paste"><PasteIcon /></ToolButton>
        <ToolButton aria-label="Format painter"><BrushIcon /></ToolButton>
        <ToolRule />
        <ToolButton aria-label="Undo"><CurvedArrow /></ToolButton>
        <CaretButton aria-label="Undo list"><Caret w={10} color="#111" /></CaretButton>
        <ToolButton $dim aria-label="Redo"><CurvedArrow flip /></ToolButton>
        <CaretButton $dim aria-label="Redo list"><Caret w={10} /></CaretButton>
        <ToolRule />
        <ToolButton aria-label="AutoSum"><SigmaIcon /></ToolButton>
        <CaretButton aria-label="AutoSum list"><Caret w={10} color="#111" /></CaretButton>
        <ToolButton $dim aria-label="Sort"><SortIcon /></ToolButton>
        <CaretButton $dim aria-label="Sort list"><Caret w={10} /></CaretButton>
        <ToolButton $dim aria-label="Filter"><FunnelIcon /></ToolButton>
        <CaretButton $dim aria-label="Filter list"><Caret w={10} /></CaretButton>
        <ToolRule />
        <PressedTool aria-label="Formula builder"><FxBoxIcon /></PressedTool>
        <ToolButton aria-label="Toolbox"><FormIcon /></ToolButton>
        <ToolButton aria-label="Media"><MediaIcon /></ToolButton>
        <ZoomBox>
          <ZoomSelect aria-label="Zoom"><option>100%</option></ZoomSelect>
          <ZoomCaret><Caret color="#444" /></ZoomCaret>
        </ZoomBox>
        <ToolRule />
        <ToolButton aria-label="Help"><HelpIcon /></ToolButton>
        <SheetSearch>
          <SearchScope><LensIcon w={28} color="#333" /><Caret w={14} color="#333" /></SearchScope>
          <SearchInput aria-label="Search in Sheet" placeholder="Search in Sheet" />
        </SheetSearch>
      </Toolbar>

      <TabStrip>
        <Tab $w={184} $indent={22}><HomeIcon />Home</Tab>
        <Tab $w={138}>Layout</Tab>
        <Tab $w={136}>Tables</Tab>
        <Tab $w={138}>Charts</Tab>
        <Tab $w={166}>SmartArt</Tab>
        <Tab $w={166}>Formulas</Tab>
        <Tab $w={103} $open $indent={10}>Data</Tab>
        <ActiveTab $w={201} $indent={20}>
          <TabNotch width="20" height="38" viewBox="0 0 20 38"><path d="M0 0l18 19L0 38z" fill="#c0d4be" /><path d="M0 0l18 19L0 38" fill="none" stroke="#8f9f90" strokeWidth="2" /></TabNotch>
          <span>PivotTable</span>
        </ActiveTab>
        <Tab $w={142}>Review</Tab>
        <StripTools>
          <StripRule />
          <StripButton $m={16} aria-label="Collapse ribbon"><svg width="20" height="16" viewBox="0 0 20 16"><path d="M2 14l8-10 8 10" fill="none" stroke="#4c4c4c" strokeWidth="4" /></svg></StripButton>
          <StripButton $m={22} aria-label="Ribbon settings"><GearIcon /><Caret w={12} color="#444" /></StripButton>
        </StripTools>
      </TabStrip>

      <Ribbon>
        <RibbonPanel>
          <RibbonGroup $w={551}>
            <GroupTitle>Field</GroupTitle>
            <GroupBody $pad={11}>
              <FieldColumn>
                <FieldInput aria-label="Active field" defaultValue="Title" />
                <FieldSettings><SettingsIcon />Settings</FieldSettings>
              </FieldColumn>
              <BigDrop w={120} label="Formulas"><FormulasIcon /></BigDrop>
              <MiniColumn $w={130} $pad={2}>
                <MiniButton $off><OutlineIcon open />Expand</MiniButton>
                <MiniButton $off><OutlineIcon />Collapse</MiniButton>
              </MiniColumn>
              <BigDrop w={110} label="Group"><GroupIcon /></BigDrop>
            </GroupBody>
          </RibbonGroup>
          <GroupRule />
          <RibbonGroup $w={416}>
            <GroupTitle>Design</GroupTitle>
            <GroupBody $pad={10}>
              <BigDrop w={104} label="Subtotals"><DocIcon kind="subtotals" /></BigDrop>
              <BigDrop w={100} label="Totals"><DocIcon kind="totals" /></BigDrop>
              <BigDrop w={98} label="Layout"><DocIcon kind="layout" /></BigDrop>
              <BigDrop w={98} label="Blanks"><DocIcon kind="blanks" /></BigDrop>
            </GroupBody>
          </RibbonGroup>
          <GroupRule />
          <RibbonGroup $w={958}>
            <GroupTitle>PivotTable Styles</GroupTitle>
            <GroupBody>
              <Gallery>
                <GalleryArrow aria-label="Previous styles"><svg width="12" height="16" viewBox="0 0 12 16"><path d="M11 0v16L1 8z" fill="#333" /></svg></GalleryArrow>
                <Thumbs>
                  <Thumb aria-label="Style 1"><OrangeThumb /></Thumb>
                  {palettes.map((p, i) => <Thumb key={p.top} $on={i === 0} aria-label={`Style ${i + 2}`}><StyleThumb {...p} /></Thumb>)}
                </Thumbs>
                <GalleryArrow aria-label="More styles"><svg width="12" height="16" viewBox="0 0 12 16"><path d="M1 0v16l10-8z" fill="#333" /></svg></GalleryArrow>
              </Gallery>
              <BigDrop w={116} lines={2} label={<>Row &amp;<br />Column</>}><RowColIcon /></BigDrop>
            </GroupBody>
          </RibbonGroup>
          <GroupRule />
          <RibbonGroup $w={512}>
            <GroupTitle>Data</GroupTitle>
            <GroupBody>
              <BigDrop w={102} label="Select">
                <PointerHost>
                  <SelectIcon />
                  <Pointer width="22" height="32" viewBox="0 0 22 32"><path d="M2 2v23l5-5 4 9 5-2-4-9h7z" fill="#000" stroke="#fff" strokeWidth="1.500" /></Pointer>
                </PointerHost>
              </BigDrop>
              <BigButton $w={96}><IconRow><OptionsIcon /></IconRow><span>Options</span></BigButton>
              <BigDrop w={98} label="Refresh"><RefreshIcon /></BigDrop>
              <MiniColumn $w={200} $pad={4}>
                <MiniButton><MoveIcon />Move</MiniButton>
                <MiniButton><SourceIcon />Change Source</MiniButton>
              </MiniColumn>
            </GroupBody>
          </RibbonGroup>
          <GroupRule />
          <RibbonGroup $w={340}>
            <GroupTitle>View</GroupTitle>
            <GroupBody $pad={10}>
              <Toggle aria-pressed="true"><ToggleFace><BuilderIcon /></ToggleFace>Builder</Toggle>
              <Toggle aria-pressed="true"><ToggleFace><TrianglesIcon /></ToggleFace>Triangles</Toggle>
              <Toggle aria-pressed="true"><ToggleFace><HeadersIcon /></ToggleFace>Headers</Toggle>
            </GroupBody>
          </RibbonGroup>
          <GroupRule />
        </RibbonPanel>
      </Ribbon>

      <FormulaBar>
        <NameBox aria-label="Name box" defaultValue="A4" />
        <Stepper aria-label="Name list"><svg width="12" height="24" viewBox="0 0 12 24"><path d="M6 1l5 8H1zM6 23l5-8H1z" fill="#222" /></svg></Stepper>
        <EntryTools>
          <EntryMark kind="cancel" />
          <EntryMark kind="accept" />
          <DialIcon />
          <FxButton aria-label="Insert function">fx</FxButton>
        </EntryTools>
        <FormulaInput aria-label="Formula" defaultValue="Row Labels" />
        <FormulaDrop aria-label="Expand formula bar"><Caret w={14} color="#333" /></FormulaDrop>
      </FormulaBar>
      <Divider />

      <SheetArea>
        <GridClip>
          <Grid>
            <colgroup>
              <Col $w={58} /><Col $w={424} /><Col $w={204} /><Col $w={304} />
              {columns.slice(3).map((c) => <Col key={c} $w={130} />)}
              <Col />
            </colgroup>
            <thead>
              <tr style={{ height: 26 }}>
                <Corner><svg width="20" height="18" viewBox="0 0 20 18"><path d="M19 0v17H1z" fill="#fff" stroke="#aaa" /></svg></Corner>
                {columns.map((c) => <ColHead key={c} scope="col" $active={c === 'A'}>{c}</ColHead>)}
                <ColHead />
              </tr>
            </thead>
            <tbody>
              <tr><RowHead>1</RowHead><FilterCell colSpan={3} $right="#000" $bottom="#000">Report Filter</FilterCell><Spare /></tr>
              <tr><RowHead>2</RowHead><Cell /><Cell $bottom="#000" /><Cell $bottom="#000" /><Spare /></tr>
              <tr><RowHead>3</RowHead><Cell $tone="head" $right="#000" $bottom="#000" /><Cell $tone="head" $right="#808080" $bottom="#808080">Values</Cell><Cell $tone="head" $right="#000" $bottom="#808080" /><Spare /></tr>
              <tr>
                <RowHead $active>4</RowHead>
                <ActiveCell $tone="head" $right="#000" $bottom="#0b50cc">
                  Row Labels
                  <DropButton aria-label="Filter row labels"><Caret w={16} color="#222" /></DropButton>
                  <FillHandle />
                </ActiveCell>
                <Cell $tone="head" $right="#808080" $bottom="#000">Count of Days</Cell>
                <Cell $tone="head" $right="#000" $bottom="#000">Average of Day Rate</Cell>
                <Spare />
              </tr>
              {rows.map(({ entry: [name, count, rate], lead }, i) => {
                const tone: Tone = lead ? 'band' : 'plain';
                return (
                  <tr key={i}>
                    <RowHead>{i + 5}</RowHead>
                    <Cell $tone={tone} $right="#000" $pad={lead ? 6 : 62}>
                      {lead ? <GroupLabel><svg width="19" height="15" viewBox="0 0 19 15"><path d="M0 0h19L9.500 15z" fill="#8b8b8b" /></svg>{name}</GroupLabel> : name}
                    </Cell>
                    <Cell $tone={tone} $num $right={lead ? '#a6a6a6' : '#fff'}>{count}</Cell>
                    <Cell $tone={tone} $num $right="#000">{rate}</Cell>
                    <Spare />
                  </tr>
                );
              })}
            </tbody>
          </Grid>
        </GridClip>
        <VScroll>
          <VSplit><svg width="18" height="10" viewBox="0 0 18 10"><path d="M0 1h18M0 9h18" stroke="#aaa" strokeWidth="2" /></svg></VSplit>
          <VThumb />
        </VScroll>

        <Builder>
          <BuilderBar>
            <button aria-label="Close"><svg width="26" height="26" viewBox="0 0 26 26"><circle cx="13" cy="13" r="12.500" fill="#dfe2e4" /><path d="M8 8l10 10M18 8L8 18" stroke="#353940" strokeWidth="4" /></svg></button>
            <BuilderTitle>PivotTable Builder</BuilderTitle>
          </BuilderBar>
          <FieldSearch>
            <LensIcon w={20} color="#eee" />
            <FieldSearchInput aria-label="Search fields" placeholder="Search fields" />
          </FieldSearch>
          <ListTitle>Field name</ListTitle>
          <FieldList>
            <FieldRows>
              {fields.map(([name, on]) => (
                <FieldRow key={name} $on={name === 'Name'}><Tick type="checkbox" defaultChecked={on} />{name}</FieldRow>
              ))}
            </FieldRows>
            <ListScroll><ListThumb /></ListScroll>
          </FieldList>
          <Grip />
          <DragHint>Drag fields between areas</DragHint>
          <Zones>
            <Zone title="Report Filter" icon={<ZoneIcon><FunnelIcon lines={false} w={32} h={29} /></ZoneIcon>} items={[]} />
            <Zone title="Column Labels" icon={<ZoneIcon><ColumnLabelsIcon /></ZoneIcon>} items={['Values']} />
            <Zone title="Row Labels" icon={<ZoneIcon><RowLabelsIcon /></ZoneIcon>} items={['Title', 'Name']} info />
            <Zone title="Values" icon={<ZoneIcon><SigmaIcon w={22} h={30} /></ZoneIcon>} items={['Count of Days', 'Average of Day Rate']} info />
          </Zones>
        </Builder>
      </SheetArea>

      <Footer>
        <ViewSwitch>
          <ViewButton $on aria-label="Normal view"><CellBlocks n={1} fill="#2f6fd6" /></ViewButton>
          <ViewButton aria-label="Page layout view"><CellBlocks n={2} fill="#444" /></ViewButton>
        </ViewSwitch>
        <FooterMain>
          <SheetTabs>
            <TabNav>
              {['M2 0v14M16 0v14L5 7z', 'M12 0v14L1 7z', 'M4 0v14l11-7z', 'M14 0v14M0 0v14l11-7z'].map((d) => (
                <button key={d} aria-label="Scroll sheets"><svg width="18" height="14" viewBox="0 0 18 14"><path d={d} fill="#a3a3a3" stroke="#a3a3a3" strokeWidth="1.500" /></svg></button>
              ))}
            </TabNav>
            <TabsRow>
              <SheetTab $w={102} $on>Sheet1</SheetTab>
              <SheetTab $w={388}>Wrapbook Wrap Report Sample.csv</SheetTab>
              <SheetTab $w={46} aria-label="Add sheet"><PlusGlyph width="18" height="18" viewBox="0 0 18 18"><path d="M9 1v16M1 9h16" stroke="#555" strokeWidth="4" /></PlusGlyph></SheetTab>
            </TabsRow>
            <HArea>
              <HSplit />
              <HTrack><HThumb /></HTrack>
              <HGrip><svg width="8" height="18" viewBox="0 0 8 18"><path d="M1 0v18M7 0v18" stroke="#999" strokeWidth="2" /></svg></HGrip>
            </HArea>
            <FooterEnd />
          </SheetTabs>
          <StatusBar>
            {[188, 754, 316, 279, 70, 68, 56].map((w) => <StatusCell key={w} $w={w} />)}
          </StatusBar>
        </FooterMain>
      </Footer>
    </Window>
  );
}
